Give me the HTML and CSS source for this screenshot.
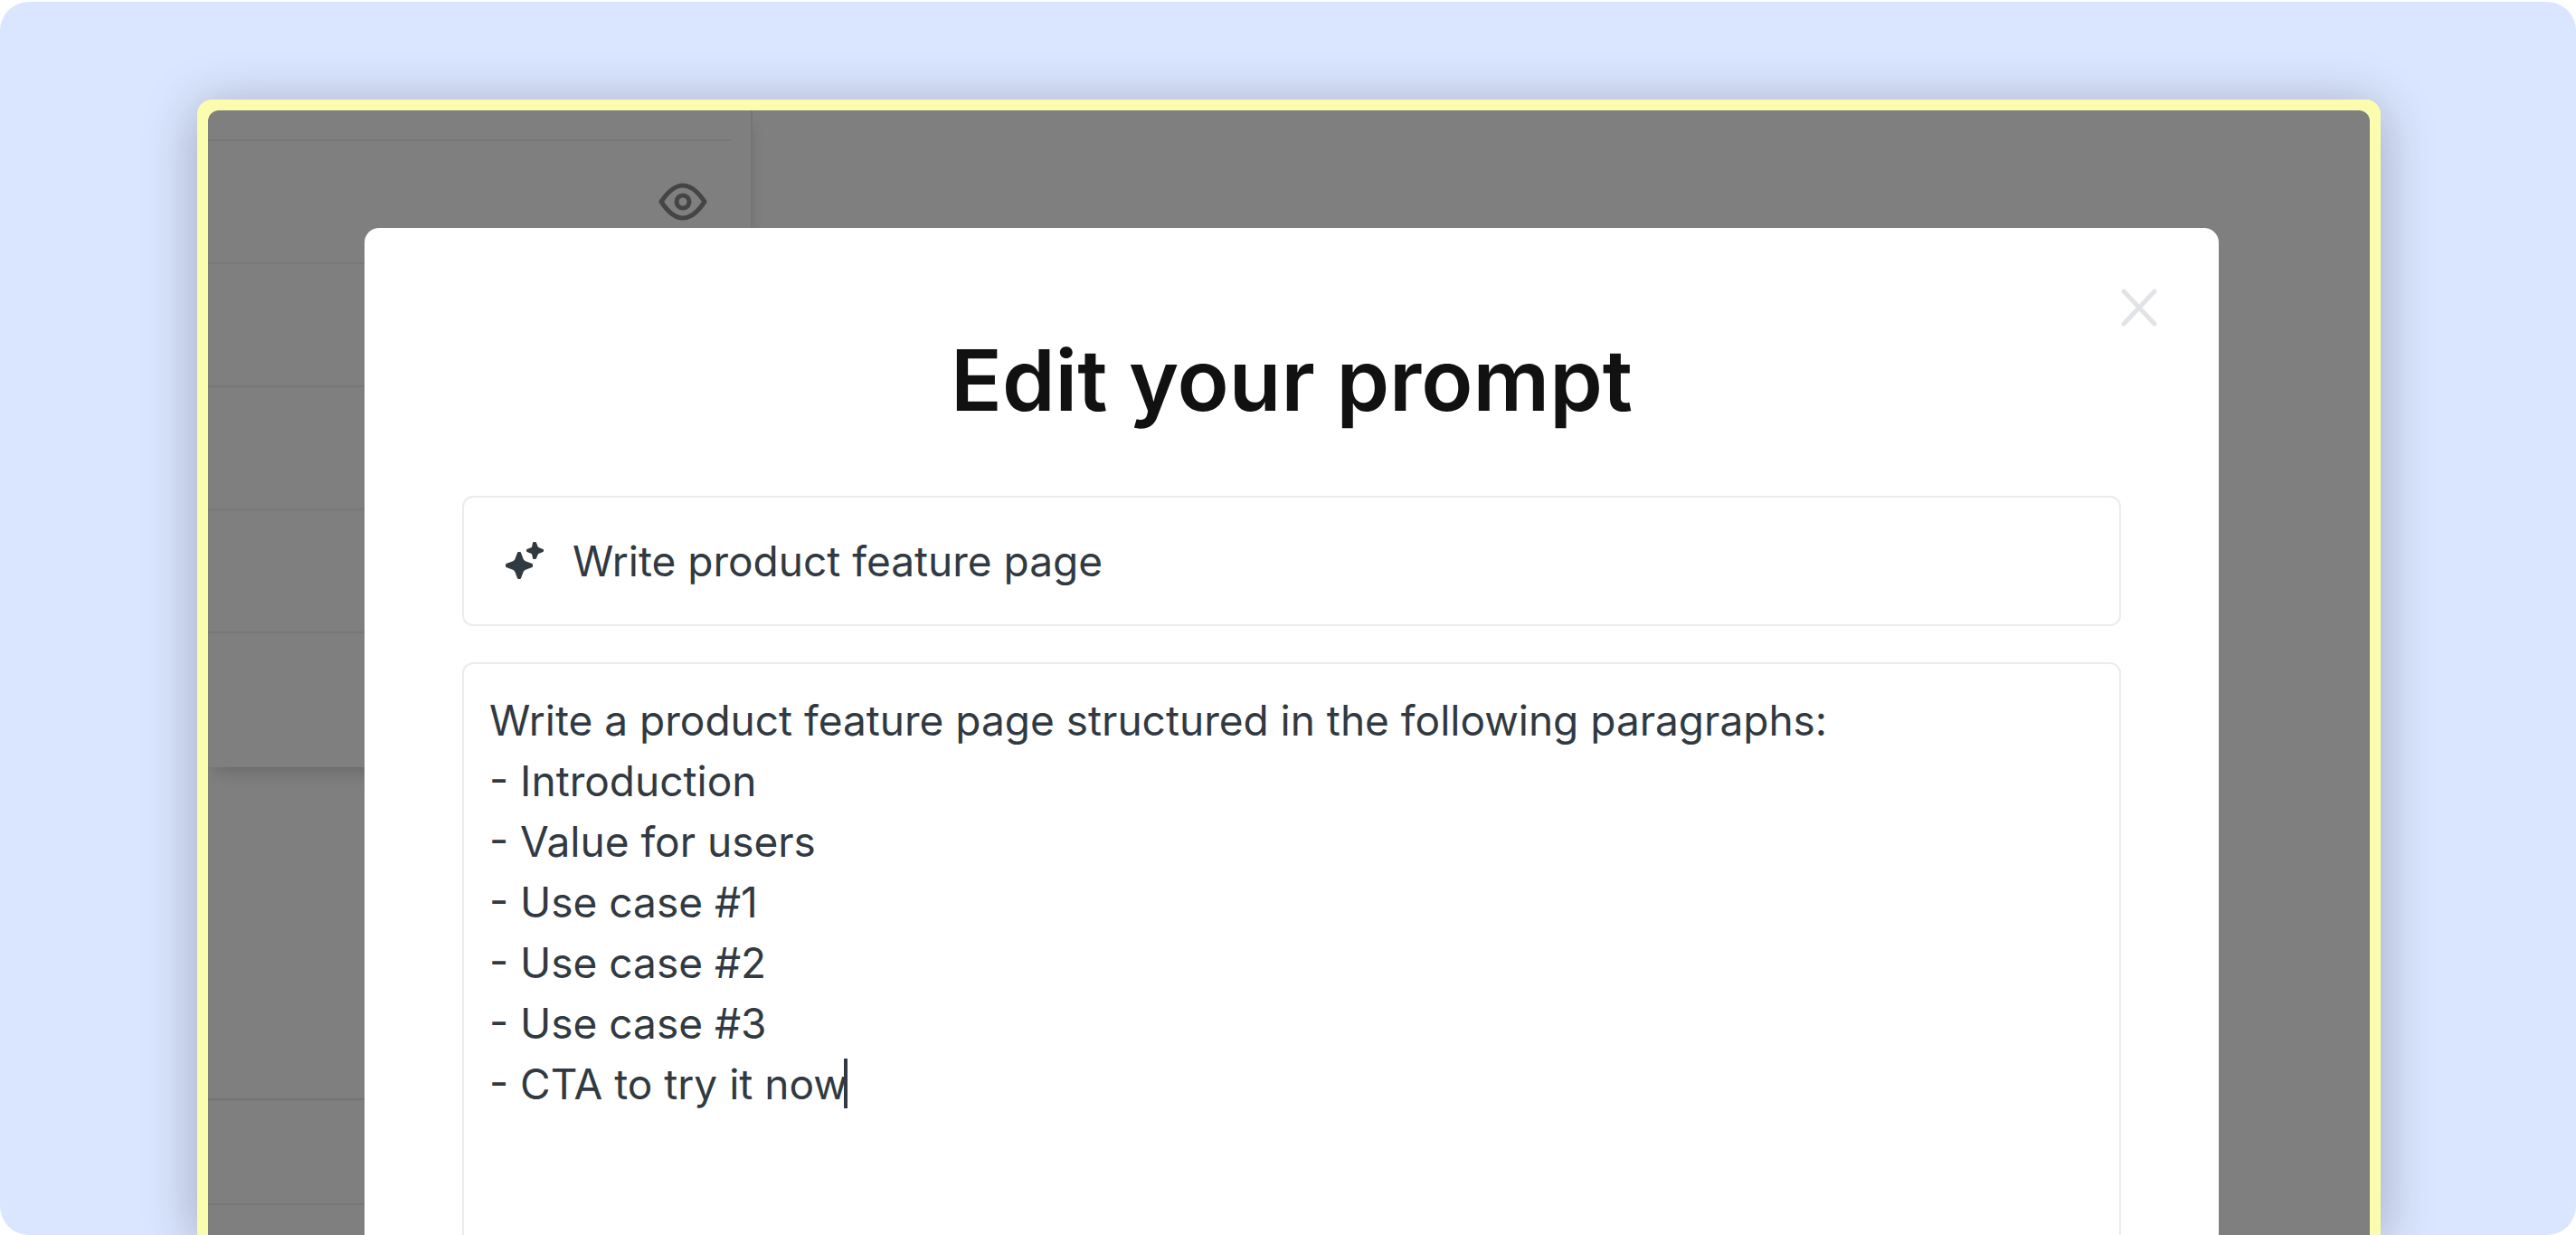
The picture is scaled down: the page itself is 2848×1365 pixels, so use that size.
FILE: index.html
```html
<!DOCTYPE html>
<html lang="en">
<head>
  <meta charset="UTF-8">
  <title>Edit your prompt</title>
  <meta name="viewport" content="width=device-width, initial-scale=1.0">
  <link rel="stylesheet" href="styles.css">
</head>
<body>

  <div class="page">
    <div class="window">
      <div class="screen">

        <!-- Prompt list behind the dialog -->
        <aside class="sidebar">
          <div class="panel">
            <div class="row row-first"></div>
            <div class="row">
              <svg class="eye" viewBox="0 0 54 42" fill="none" stroke="currentColor" stroke-width="5" stroke-linejoin="round">
                <path d="M3 21C11 9 18 3 27 3s16 6 24 18c-8 12-15 18-24 18S11 33 3 21Z"/>
                <circle cx="27" cy="21" r="7"/>
              </svg>
            </div>
            <div class="row"></div>
            <div class="row"></div>
            <div class="row"></div>
            <div class="row row-last"></div>
          </div>
          <div class="panel panel-bottom">
            <div class="row row-short"></div>
            <div class="row"></div>
          </div>
        </aside>

        <div class="backdrop"></div>

        <!-- Dialog -->
        <form class="modal" role="dialog" aria-labelledby="title">
          <button class="close" type="button" aria-label="Close">
            <svg viewBox="0 0 40 42" fill="none" stroke="currentColor" stroke-width="5" stroke-linecap="round">
              <path d="M3 3l34 36M37 3L3 39"/>
            </svg>
          </button>

          <h1 id="title">Edit your prompt</h1>

          <label class="field">
            <svg class="sparkle" viewBox="0 0 42 42" fill="currentColor" stroke="currentColor" stroke-width="2" stroke-linejoin="round">
              <path d="M14 12h2l3 8 2 2 8 3v2l-8 3-2 2-3 8h-2l-3-8-2-2-8-3v-2l8-3 2-2Z"/>
              <path d="M31 1h2l2 5 1 1 5 2v1l-5 2-1 1-2 5h-2l-1-5-1-1-5-2V9l5-2 1-1Z"/>
            </svg>
            <input type="text" value="Write product feature page" aria-label="Prompt name">
          </label>

          <div class="editor">
            <textarea rows="10" spellcheck="false" aria-label="Prompt text">Write a product feature page structured in the following paragraphs:
- Introduction
- Value for users
- Use case #1
- Use case #2
- Use case #3
- CTA to try it now</textarea>
            <span class="caret"></span>
          </div>
        </form>

      </div>
    </div>
  </div>

</body>
</html>
```
FILE: styles.css
```css
* {
  box-sizing: border-box;
}

body {
  margin: 0;
  padding-top: 2px;
  height: 100vh;
  overflow: hidden;
  background: white;
  font-family: Inter, sans-serif;
  color: #313a42;
}

.page {
  height: 100%;
  padding: 108px 216px 0 218px;
  background: #dae6ff;
  border-radius: 32px;
  overflow: hidden;
}

.window {
  height: 100%;
  padding: 12px 12px 0;
  border-radius: 16px 16px 0 0;
  background: #fcfcae;
  box-shadow: 0 8px 60px rgba(0, 0, 0, 0.28);
}

.screen {
  display: grid;
  grid-template-rows: 100%;
  height: 100%;
  border-radius: 12px 12px 0 0;
  background: white;
  overflow: hidden;
}

/* sidebar, backdrop and dialog share one cell */
.sidebar,
.backdrop,
.modal {
  grid-area: 1 / 1;
}

.panel {
  width: 602px;
  padding-right: 21px;
  border-right: 2px solid #eaeaea;
  box-shadow: 0 10px 20px -6px rgba(0, 0, 0, 0.2);
}

.panel-bottom {
  margin-top: 366px;
  border-top: 2px solid #e6e6e6;
  box-shadow: none;
}

.row {
  display: flex;
  justify-content: flex-end;
  align-items: center;
  height: 136px;
  padding-right: 27px;
  border-bottom: 2px solid #eeeeee;
}

.row-first {
  height: 34px;
}

.row-short {
  height: 116px;
}

.row-last {
  height: 148px;
  border-bottom: none;
}

.eye {
  width: 54px;
  color: #8a8a8a;
}

.backdrop {
  background: rgba(0, 0, 0, 0.5);
}

.modal {
  position: relative;
  margin: 130px 167px 0 173px;
  padding: 108px 108px 0;
  background: white;
  border-radius: 16px 16px 0 0;
}

.close {
  position: absolute;
  top: 67px;
  right: 68px;
  padding: 0;
  border: none;
  background: none;
  color: #e2e3e6;
}

.close svg {
  display: block;
  width: 40px;
}

h1 {
  margin: 0 0 68px;
  font-size: 94px;
  line-height: 120px;
  font-weight: 600;
  text-align: center;
  color: #111111;
}

.field {
  display: flex;
  align-items: center;
  gap: 32px;
  height: 144px;
  margin-bottom: 40px;
  padding: 0 46px;
  border: 2px solid #ebebf0;
  border-radius: 12px;
}

.sparkle {
  flex: none;
  width: 42px;
}

input,
textarea {
  width: 100%;
  padding: 0;
  border: none;
  outline: none;
  background: none;
  font: inherit;
  font-size: 46px;
  line-height: 67px;
  color: inherit;
}

.editor {
  position: relative;
}

textarea {
  display: block;
  padding: 29px 28px;
  border: 2px solid #ebebf0;
  border-radius: 12px;
  resize: none;
}

.caret {
  position: absolute;
  top: 438px;
  left: 422px;
  width: 4px;
  height: 55px;
  background: #313a42;
}
```
